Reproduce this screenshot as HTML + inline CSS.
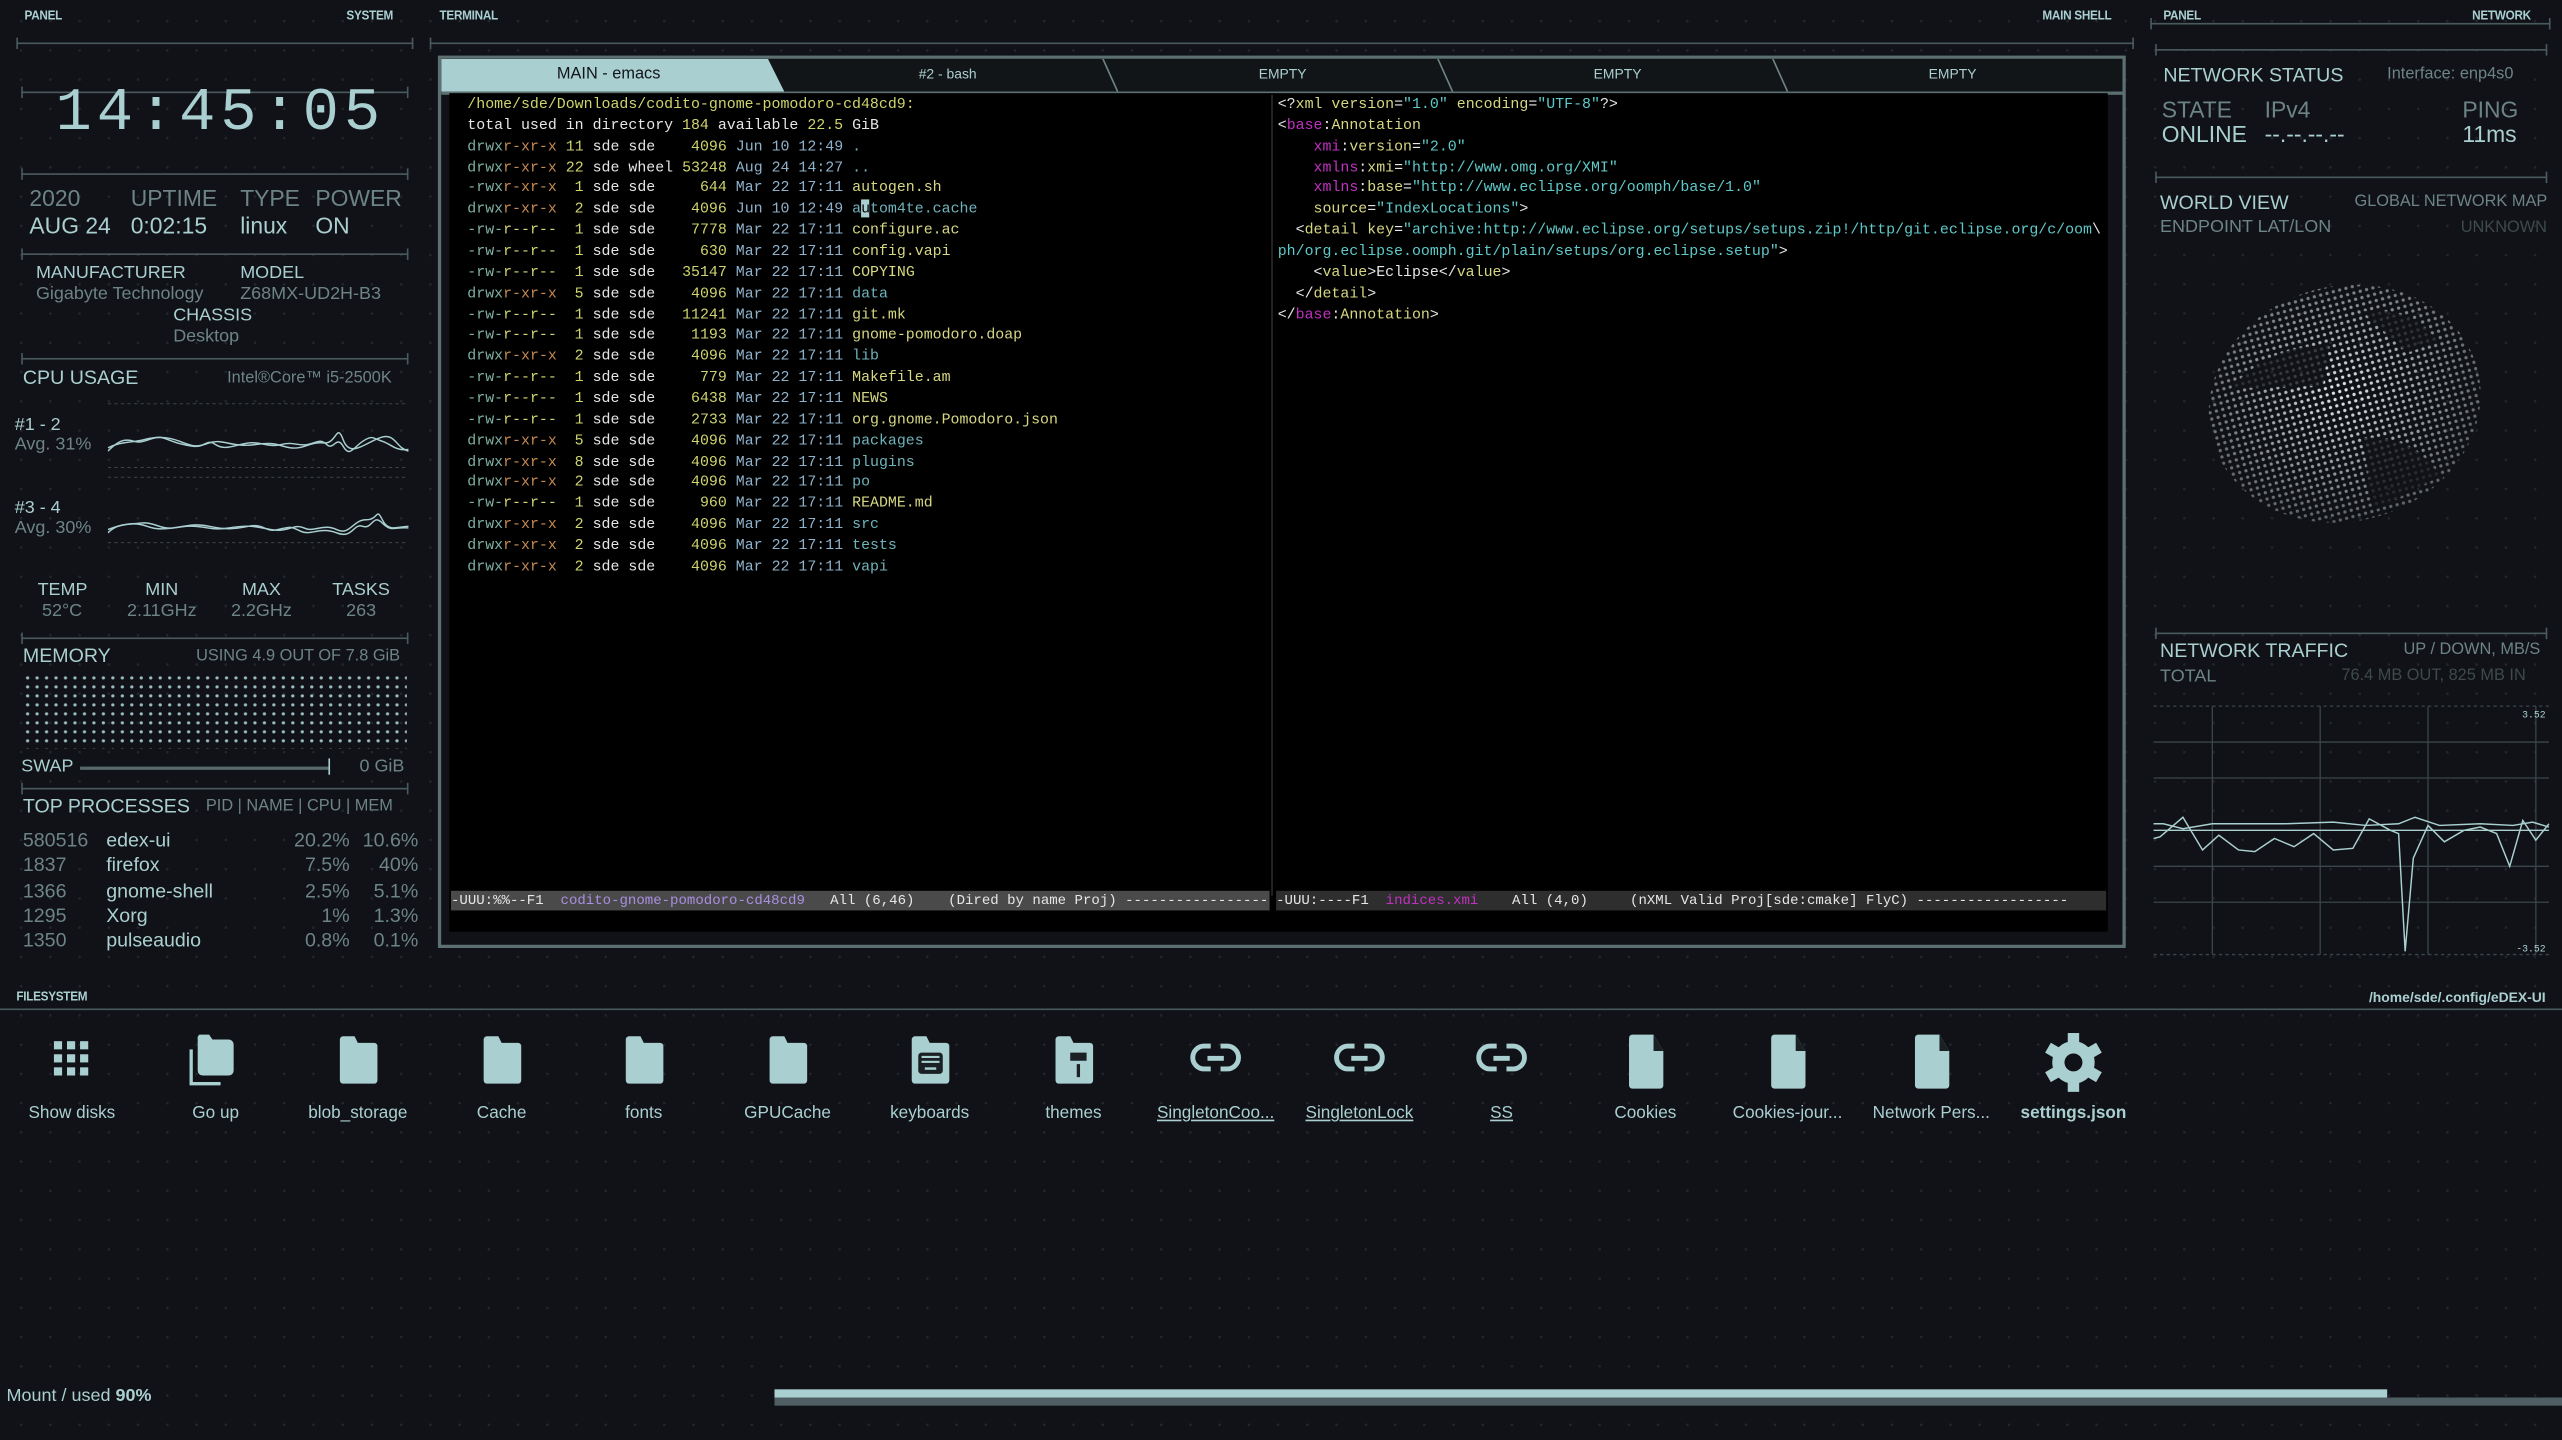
<!DOCTYPE html>
<html><head><meta charset="utf-8">
<style>
html,body{margin:0;padding:0;background:#101217;overflow:hidden}
#root{position:absolute;left:0;top:0;width:1568px;height:881px;transform:scale(1.63393,1.63451);transform-origin:0 0;
background-color:#101217;background-image:radial-gradient(circle,#23272c 0.7px,transparent 0.9px);background-size:17.9px 17.9px;background-position:4px 4px;
font-family:"Liberation Sans",sans-serif;color:#aacfd1;overflow:hidden}
.a{position:absolute;white-space:nowrap}
.hd{font-size:8px;font-weight:bold;letter-spacing:-0.2px;transform:scaleX(0.9);transform-origin:0 0}
.ln{position:absolute;height:1px;background:#4a5a5c}
.ln:before,.ln:after{content:"";position:absolute;top:-3px;width:1px;height:7px;background:#4a5a5c}
.ln:before{left:0}.ln:after{right:0}
.dim{color:#6d8486}
.mono{font-family:"Liberation Mono",monospace}
#term{position:absolute;left:268px;top:34px;width:1033px;height:546px;border:2px solid #5d7071;box-sizing:border-box;background:#101217}
.tab{position:absolute;top:0;height:19px;font-size:8.5px;line-height:19px;text-align:center;color:#aacfd1}
pre{margin:0;font-family:"Liberation Mono",monospace;font-size:9.15px;line-height:12.86px;color:#e6e6e6;white-space:pre !important}
.p{color:#7fb0a4}.o{color:#c58a52}.y{color:#cfd46e}.w{color:#e6e6e6}.b{color:#8fb2cc}.d{color:#6fb3bb}.f{color:#d6d782}.m{color:#c031c0}.c{color:#5fc8c8}
.fi{position:absolute;top:632px;width:88px;text-align:center}
.fi .lb{position:absolute;top:43px;left:0;width:88px;font-size:10.5px;color:#aacfd1;text-align:center}
.fi svg{display:block;margin:0 auto}
</style></head><body><div id="root">

<!-- LEFT PANEL -->
<div class="a hd" style="left:15px;top:5px">PANEL</div>
<div class="a hd" style="left:212px;top:5px">SYSTEM</div>
<div class="ln" style="left:10px;top:26px;width:243px"></div>
<div class="ln" style="left:13px;top:56px;width:237px"></div>
<div class="a" style="left:34px;top:49px;font-size:37px;letter-spacing:3px;font-family:'Liberation Mono',monospace;color:#aacfd1">14:45:05</div>
<div class="ln" style="left:13px;top:106px;width:237px"></div>
<div class="a" style="left:18px;top:113px;font-size:14px;line-height:17px"><span class="dim">2020</span><br>AUG 24</div>
<div class="a" style="left:80px;top:113px;font-size:14px;line-height:17px"><span class="dim">UPTIME</span><br>0:02:15</div>
<div class="a" style="left:147px;top:113px;font-size:14px;line-height:17px"><span class="dim">TYPE</span><br>linux</div>
<div class="a" style="left:193px;top:113px;font-size:14px;line-height:17px"><span class="dim">POWER</span><br>ON</div>
<div class="ln" style="left:13px;top:155px;width:237px"></div>
<div class="a" style="left:22px;top:161px;font-size:11px;line-height:13px">MANUFACTURER<br><span class="dim">Gigabyte Technology</span></div>
<div class="a" style="left:147px;top:161px;font-size:11px;line-height:13px">MODEL<br><span class="dim">Z68MX-UD2H-B3</span></div>
<div class="a" style="left:106px;top:187px;font-size:11px;line-height:13px">CHASSIS<br><span class="dim">Desktop</span></div>
<div class="ln" style="left:13px;top:219px;width:237px"></div>
<div class="a" style="left:14px;top:224px;font-size:12px">CPU USAGE</div>
<div class="a dim" style="left:139px;top:226px;font-size:10px">Intel®Core™ i5-2500K</div>
<div class="a" style="left:9px;top:254px;font-size:11px;line-height:12px">#1 - 2<br><span class="dim">Avg. 31%</span></div>
<div class="a" style="left:9px;top:305px;font-size:11px;line-height:12px">#3 - 4<br><span class="dim">Avg. 30%</span></div>
<svg class="a" style="left:66px;top:246px" width="184" height="100" viewBox="0 0 184 100">
<g stroke="#3b4548" stroke-dasharray="2 2" stroke-width="0.6"><line x1="0" y1="1" x2="184" y2="1"/><line x1="0" y1="40" x2="184" y2="40"/><line x1="0" y1="46" x2="184" y2="46"/><line x1="0" y1="86" x2="184" y2="86"/></g>
<g fill="none" stroke="#aacfd1" stroke-width="0.9">
<path d="M0 30 C6 24 10 22 16 24 S28 20 34 22 S44 26 52 27 S60 22 66 26 S78 26 86 25 S98 28 106 26 S116 27 122 26 S130 22 134 26 S140 20 144 27 S150 28 156 24 S162 22 168 24 S176 30 184 29"/>
<path d="M0 28 C8 24 14 25 22 23 S36 21 44 24 S54 28 62 25 S76 28 90 26 S104 27 112 28 S124 24 132 25 S140 12 144 23 S156 26 166 22 S176 28 184 30"/>
<path d="M0 80 C6 74 12 75 20 74 S32 78 40 77 S52 74 62 76 S76 78 86 76 S96 80 104 78 S112 76 118 79 S130 76 140 80 S150 74 156 76 S162 68 168 74 S176 76 184 77"/>
<path d="M0 78 C8 75 16 73 24 76 S38 77 48 76 S62 79 74 77 S90 76 100 78 S114 74 120 77 S132 74 140 78 S150 72 158 72 S164 64 168 72 S178 76 184 76"/>
</g></svg>
<div class="a" style="left:23px;top:355px;font-size:11px;line-height:13px;text-align:center;width:30px">TEMP<br><span class="dim">52°C</span></div>
<div class="a" style="left:76px;top:355px;font-size:11px;line-height:13px;text-align:center;width:46px">MIN<br><span class="dim">2.11GHz</span></div>
<div class="a" style="left:137px;top:355px;font-size:11px;line-height:13px;text-align:center;width:46px">MAX<br><span class="dim">2.2GHz</span></div>
<div class="a" style="left:198px;top:355px;font-size:11px;line-height:13px;text-align:center;width:46px">TASKS<br><span class="dim">263</span></div>
<div class="ln" style="left:13px;top:390px;width:237px"></div>
<div class="a" style="left:14px;top:394px;font-size:12px">MEMORY</div>
<div class="a dim" style="left:120px;top:396px;font-size:10px">USING 4.9 OUT OF 7.8 GiB</div>
<div class="a" style="left:14px;top:412px;width:235px;height:46px;background-image:radial-gradient(circle,#aacfd1 0.9px,transparent 1.1px);background-size:5.8px 5.5px;opacity:0.9"></div>
<div class="a" style="left:13px;top:463px;font-size:11px">SWAP</div>
<div class="a" style="left:49px;top:469px;width:152px;height:2px;background:#56686a"></div>
<div class="a" style="left:201px;top:464px;width:1px;height:10px;background:#aacfd1"></div>
<div class="a dim" style="left:220px;top:463px;font-size:11px">0 GiB</div>
<div class="ln" style="left:13px;top:482px;width:237px"></div>
<div class="a" style="left:14px;top:486px;font-size:12px">TOP PROCESSES</div>
<div class="a dim" style="left:126px;top:488px;font-size:10px">PID | NAME | CPU | MEM</div>
<div class="a" style="left:14px;top:507px;font-size:12px;line-height:15.3px"><span class="dim">580516<br>1837<br>1366<br>1295<br>1350</span></div>
<div class="a" style="left:65px;top:507px;font-size:12px;line-height:15.3px">edex-ui<br>firefox<br>gnome-shell<br>Xorg<br>pulseaudio</div>
<div class="a dim" style="left:160px;top:507px;width:54px;text-align:right;font-size:12px;line-height:15.3px">20.2%<br>7.5%<br>2.5%<br>1%<br>0.8%</div>
<div class="a dim" style="left:214px;top:507px;width:42px;text-align:right;font-size:12px;line-height:15.3px">10.6%<br>40%<br>5.1%<br>1.3%<br>0.1%</div>

<!-- TERMINAL HEADER -->
<div class="a hd" style="left:269px;top:5px">TERMINAL</div>
<div class="a hd" style="left:1250px;top:5px">MAIN SHELL</div>
<div class="ln" style="left:263px;top:26px;width:1043px"></div>

<div id="term">
<div class="a" style="left:0;top:0;width:1029px;height:20px;background:#121518;border-bottom:2px solid #5d7071"></div>
<svg class="a" style="left:0;top:0" width="1029" height="20"><polygon points="0,0 200,0 210,20 0,20" fill="#aacfd1"/>
<g stroke="#6d8486" stroke-width="1"><line x1="405" y1="0" x2="414" y2="20"/><line x1="610" y1="0" x2="619" y2="20"/><line x1="815" y1="0" x2="824" y2="20"/></g></svg>
<div class="tab" style="left:0;width:205px;color:#10161a;font-size:10px">MAIN - emacs</div>
<div class="tab" style="left:210px;width:200px">#2 - bash</div>
<div class="tab" style="left:415px;width:200px">EMPTY</div>
<div class="tab" style="left:620px;width:200px">EMPTY</div>
<div class="tab" style="left:825px;width:200px">EMPTY</div>
<div class="a" style="left:5px;top:21px;width:1015px;height:513px;background:#000"></div>
<div class="a" style="left:508px;top:22px;width:1px;height:490px;background:#2a2a2a"></div>
<pre class="a" style="left:16px;top:22px"><span class="y">/home/sde/Downloads/codito-gnome-pomodoro-cd48cd9:</span>
<span class="w">total used in directory </span><span class="y">184</span> available <span class="y">22.5</span> GiB
<span class="p">drwx</span><span class="o">r-xr-x</span> <span class="y">11</span> sde sde    <span class="y">4096</span> <span class="b">Jun 10 12:49</span> <span class="d">.</span>
<span class="p">drwx</span><span class="o">r-xr-x</span> <span class="y">22</span> sde wheel <span class="y">53248</span> <span class="b">Aug 24 14:27</span> <span class="d">..</span>
<span class="p">-rwx</span><span class="o">r-xr-x</span>  <span class="y">1</span> sde sde     <span class="y">644</span> <span class="b">Mar 22 17:11</span> <span class="f">autogen.sh</span>
<span class="p">drwx</span><span class="o">r-xr-x</span>  <span class="y">2</span> sde sde    <span class="y">4096</span> <span class="b">Jun 10 12:49</span> <span class="d">a<span style="background:#aacfd1;color:#000">u</span>tom4te.cache</span>
<span class="p">-rw-</span><span class="y">r--r--</span>  <span class="y">1</span> sde sde    <span class="y">7778</span> <span class="b">Mar 22 17:11</span> <span class="f">configure.ac</span>
<span class="p">-rw-</span><span class="y">r--r--</span>  <span class="y">1</span> sde sde     <span class="y">630</span> <span class="b">Mar 22 17:11</span> <span class="f">config.vapi</span>
<span class="p">-rw-</span><span class="y">r--r--</span>  <span class="y">1</span> sde sde   <span class="y">35147</span> <span class="b">Mar 22 17:11</span> <span class="f">COPYING</span>
<span class="p">drwx</span><span class="o">r-xr-x</span>  <span class="y">5</span> sde sde    <span class="y">4096</span> <span class="b">Mar 22 17:11</span> <span class="d">data</span>
<span class="p">-rw-</span><span class="y">r--r--</span>  <span class="y">1</span> sde sde   <span class="y">11241</span> <span class="b">Mar 22 17:11</span> <span class="f">git.mk</span>
<span class="p">-rw-</span><span class="y">r--r--</span>  <span class="y">1</span> sde sde    <span class="y">1193</span> <span class="b">Mar 22 17:11</span> <span class="f">gnome-pomodoro.doap</span>
<span class="p">drwx</span><span class="o">r-xr-x</span>  <span class="y">2</span> sde sde    <span class="y">4096</span> <span class="b">Mar 22 17:11</span> <span class="d">lib</span>
<span class="p">-rw-</span><span class="y">r--r--</span>  <span class="y">1</span> sde sde     <span class="y">779</span> <span class="b">Mar 22 17:11</span> <span class="f">Makefile.am</span>
<span class="p">-rw-</span><span class="y">r--r--</span>  <span class="y">1</span> sde sde    <span class="y">6438</span> <span class="b">Mar 22 17:11</span> <span class="f">NEWS</span>
<span class="p">-rw-</span><span class="y">r--r--</span>  <span class="y">1</span> sde sde    <span class="y">2733</span> <span class="b">Mar 22 17:11</span> <span class="f">org.gnome.Pomodoro.json</span>
<span class="p">drwx</span><span class="o">r-xr-x</span>  <span class="y">5</span> sde sde    <span class="y">4096</span> <span class="b">Mar 22 17:11</span> <span class="d">packages</span>
<span class="p">drwx</span><span class="o">r-xr-x</span>  <span class="y">8</span> sde sde    <span class="y">4096</span> <span class="b">Mar 22 17:11</span> <span class="d">plugins</span>
<span class="p">drwx</span><span class="o">r-xr-x</span>  <span class="y">2</span> sde sde    <span class="y">4096</span> <span class="b">Mar 22 17:11</span> <span class="d">po</span>
<span class="p">-rw-</span><span class="y">r--r--</span>  <span class="y">1</span> sde sde     <span class="y">960</span> <span class="b">Mar 22 17:11</span> <span class="f">README.md</span>
<span class="p">drwx</span><span class="o">r-xr-x</span>  <span class="y">2</span> sde sde    <span class="y">4096</span> <span class="b">Mar 22 17:11</span> <span class="d">src</span>
<span class="p">drwx</span><span class="o">r-xr-x</span>  <span class="y">2</span> sde sde    <span class="y">4096</span> <span class="b">Mar 22 17:11</span> <span class="d">tests</span>
<span class="p">drwx</span><span class="o">r-xr-x</span>  <span class="y">2</span> sde sde    <span class="y">4096</span> <span class="b">Mar 22 17:11</span> <span class="d">vapi</span></pre>
<pre class="a" style="left:512px;top:22px"><span class="w">&lt;?</span><span class="f">xml version</span>=<span class="c">"1.0"</span> <span class="f">encoding</span>=<span class="c">"UTF-8"</span>?&gt;
&lt;<span class="m">base</span>:<span class="f">Annotation</span>
    <span class="m">xmi</span>:<span class="f">version</span>=<span class="c">"2.0"</span>
    <span class="m">xmlns</span>:<span class="f">xmi</span>=<span class="c">"http://www.omg.org/XMI"</span>
    <span class="m">xmlns</span>:<span class="f">base</span>=<span class="c">"http://www.eclipse.org/oomph/base/1.0"</span>
    <span class="f">source</span>=<span class="c">"IndexLocations"</span>&gt;
  &lt;<span class="f">detail key</span>=<span class="c">"archive:http://www.eclipse.org/setups/setups.zip!/http/git.eclipse.org/c/oom</span>\
<span class="c">ph/org.eclipse.oomph.git/plain/setups/org.eclipse.setup"</span>&gt;
    &lt;<span class="f">value</span>&gt;Eclipse&lt;/<span class="f">value</span>&gt;
  &lt;/<span class="f">detail</span>&gt;
&lt;/<span class="m">base</span>:<span class="f">Annotation</span>&gt;</pre>
<div class="a mono" style="left:6px;top:509px;width:501px;height:12px;background:#4a4a4a;font-size:8.6px;line-height:12px;color:#e6e6e6;overflow:hidden;white-space:pre">-UUU:%%--F1  <span style="color:#a98fe0">codito-gnome-pomodoro-cd48cd9</span>   All (6,46)    (Dired by name Proj) -----------------</div>
<div class="a mono" style="left:511px;top:509px;width:508px;height:12px;background:#2e2e2e;font-size:8.6px;line-height:12px;color:#e6e6e6;overflow:hidden;white-space:pre">-UUU:----F1  <span class="m">indices.xmi</span>    All (4,0)     (nXML Valid Proj[sde:cmake] FlyC) ------------------</div>
</div>

<!-- RIGHT PANEL -->
<div class="a hd" style="left:1324px;top:5px">PANEL</div>
<div class="a hd" style="left:1513px;top:5px">NETWORK</div>
<div class="ln" style="left:1316px;top:14px;width:245px"></div>
<div class="ln" style="left:1319px;top:30px;width:240px"></div>
<div class="a" style="left:1324px;top:39px;font-size:12px">NETWORK STATUS</div>
<div class="a dim" style="left:1461px;top:40px;font-size:10px">Interface: enp4s0</div>
<div class="a" style="left:1323px;top:60px;font-size:14px;line-height:15px"><span class="dim">STATE</span><br>ONLINE</div>
<div class="a" style="left:1386px;top:60px;font-size:14px;line-height:15px"><span class="dim">IPv4</span><br>--.--.--.--</div>
<div class="a" style="left:1507px;top:60px;font-size:14px;line-height:15px"><span class="dim">PING</span><br>11ms</div>
<div class="ln" style="left:1319px;top:108px;width:240px"></div>
<div class="a" style="left:1322px;top:117px;font-size:12px">WORLD VIEW</div>
<div class="a dim" style="left:1441px;top:118px;font-size:10px">GLOBAL NETWORK MAP</div>
<div class="a dim" style="left:1322px;top:133px;font-size:11px">ENDPOINT LAT/LON</div>
<div class="a" style="left:1506px;top:134px;font-size:10px;color:#3e4a4c">UNKNOWN</div>
<svg class="a" style="left:1340px;top:165px" width="200" height="160" viewBox="0 0 200 160">
<defs><pattern id="dp" width="4" height="4" patternUnits="userSpaceOnUse"><circle cx="2" cy="2" r="1" fill="#e4ecee"/></pattern>
<radialGradient id="sh" cx="50%" cy="45%" r="60%"><stop offset="0" stop-color="#fff" stop-opacity="1"/><stop offset="1" stop-color="#fff" stop-opacity="0.3"/></radialGradient>
<mask id="mk"><ellipse cx="95" cy="82" rx="84" ry="72" fill="url(#sh)"/><path d="M30 55 Q60 35 95 45 L85 68 Z M100 105 Q130 110 140 140 L95 150 Z M120 30 Q150 35 160 60 L140 62 Z" fill="#000" opacity="0.75"/></mask></defs>
<ellipse cx="95" cy="82" rx="84" ry="72" fill="url(#dp)" mask="url(#mk)" transform="rotate(-15 95 82)"/>
</svg>
<div class="ln" style="left:1319px;top:387px;width:240px"></div>
<div class="a" style="left:1322px;top:391px;font-size:12px">NETWORK TRAFFIC</div>
<div class="a dim" style="left:1471px;top:392px;font-size:10px">UP / DOWN, MB/S</div>
<div class="a dim" style="left:1322px;top:408px;font-size:11px">TOTAL</div>
<div class="a" style="left:1433px;top:408px;font-size:10px;color:#3e4a4c">76.4 MB OUT, 825 MB IN</div>
<svg class="a" style="left:1318px;top:430px" width="244" height="156" viewBox="0 0 244 156">
<g stroke="#3a4649" stroke-width="0.8"><line x1="0" y1="2" x2="244" y2="2" stroke-dasharray="2 2"/><line x1="0" y1="24" x2="242" y2="24"/><line x1="0" y1="46" x2="242" y2="46"/><line x1="0" y1="100" x2="242" y2="100"/><line x1="0" y1="122" x2="242" y2="122"/><line x1="0" y1="154" x2="244" y2="154" stroke-dasharray="2 2"/>
<line x1="36" y1="2" x2="36" y2="154"/><line x1="102" y1="2" x2="102" y2="154"/><line x1="168" y1="2" x2="168" y2="154"/><line x1="234" y1="2" x2="234" y2="154"/></g>
<line x1="0" y1="78" x2="242" y2="78" stroke="#aacfd1" stroke-width="0.8"/>
<g fill="none" stroke="#aacfd1" stroke-width="0.9">
<path d="M0 74 L6 74 L18 77 L36 74 L80 74 L110 73 L130 75 L150 74 L160 70 L175 75 L200 74 L220 75 L232 73 L242 76"/>
<path d="M0 83 L4 82 L18 70 L30 90 L40 81 L52 90 L62 91 L74 83 L86 88 L98 80 L110 90 L122 89 L132 71 L145 78 L150 80 L154 152 L159 95 L168 75 L178 85 L190 78 L200 76 L210 80 L218 100 L226 72 L234 84 L242 74"/>
</g>
<text x="240" y="9" font-size="6" fill="#aacfd1" font-family="Liberation Mono" text-anchor="end">3.52</text>
<text x="240" y="152" font-size="6" fill="#aacfd1" font-family="Liberation Mono" text-anchor="end">-3.52</text>
</svg>

<!-- FILESYSTEM -->
<div class="a hd" style="left:10px;top:605px">FILESYSTEM</div>
<div class="a" style="right:10px;top:605px;font-size:8.5px;font-weight:bold">/home/sde/.config/eDEX-UI</div>
<div class="a" style="left:0;top:617px;width:1568px;height:1px;background:#4a5a5c"></div>

<div class="fi" style="left:0"><svg width="30" height="40" viewBox="0 0 30 40"><g fill="#aacfd1"><rect x="4" y="5" width="5" height="5"/><rect x="12" y="5" width="5" height="5"/><rect x="20" y="5" width="5" height="5"/><rect x="4" y="13" width="5" height="5"/><rect x="12" y="13" width="5" height="5"/><rect x="20" y="13" width="5" height="5"/><rect x="4" y="21" width="5" height="5"/><rect x="12" y="21" width="5" height="5"/><rect x="20" y="21" width="5" height="5"/></g></svg><div class="lb">Show disks</div></div>
<div class="fi" style="left:88px"><svg width="40" height="40" viewBox="0 0 40 40"><path d="M10 1 h6 l2 3 h10 a3 3 0 0 1 3 3 v16 a3 3 0 0 1 -3 3 h-16 a3 3 0 0 1 -3 -3 v-19 a3 3 0 0 1 1 -3z" fill="#aacfd1"/><path d="M5 10 v21 h18" stroke="#aacfd1" stroke-width="2" fill="none"/></svg><div class="lb">Go up</div></div>
<div class="fi" style="left:175px"><svg width="40" height="40" viewBox="0 0 40 40"><path d="M11 2 h7 l2 4 h10 a2 2 0 0 1 2 2 v21 a2 2 0 0 1 -2 2 h-19 a2 2 0 0 1 -2 -2 v-25 a2 2 0 0 1 2 -2z" fill="#aacfd1"/></svg><div class="lb">blob_storage</div></div>
<div class="fi" style="left:263px"><svg width="40" height="40" viewBox="0 0 40 40"><path d="M11 2 h7 l2 4 h10 a2 2 0 0 1 2 2 v21 a2 2 0 0 1 -2 2 h-19 a2 2 0 0 1 -2 -2 v-25 a2 2 0 0 1 2 -2z" fill="#aacfd1"/></svg><div class="lb">Cache</div></div>
<div class="fi" style="left:350px"><svg width="40" height="40" viewBox="0 0 40 40"><path d="M11 2 h7 l2 4 h10 a2 2 0 0 1 2 2 v21 a2 2 0 0 1 -2 2 h-19 a2 2 0 0 1 -2 -2 v-25 a2 2 0 0 1 2 -2z" fill="#aacfd1"/></svg><div class="lb">fonts</div></div>
<div class="fi" style="left:438px"><svg width="40" height="40" viewBox="0 0 40 40"><path d="M11 2 h7 l2 4 h10 a2 2 0 0 1 2 2 v21 a2 2 0 0 1 -2 2 h-19 a2 2 0 0 1 -2 -2 v-25 a2 2 0 0 1 2 -2z" fill="#aacfd1"/></svg><div class="lb">GPUCache</div></div>
<div class="fi" style="left:525px"><svg width="40" height="40" viewBox="0 0 40 40"><path d="M11 2 h7 l2 4 h10 a2 2 0 0 1 2 2 v21 a2 2 0 0 1 -2 2 h-19 a2 2 0 0 1 -2 -2 v-25 a2 2 0 0 1 2 -2z" fill="#aacfd1"/><rect x="13" y="12" width="15" height="13" rx="2" fill="#1a2024"/><g fill="#aacfd1"><rect x="15" y="14" width="11" height="1.3"/><rect x="15" y="17" width="11" height="1.3"/><rect x="17" y="21" width="7" height="1.5"/></g></svg><div class="lb">keyboards</div></div>
<div class="fi" style="left:613px"><svg width="40" height="40" viewBox="0 0 40 40"><path d="M11 2 h7 l2 4 h10 a2 2 0 0 1 2 2 v21 a2 2 0 0 1 -2 2 h-19 a2 2 0 0 1 -2 -2 v-25 a2 2 0 0 1 2 -2z" fill="#aacfd1"/><path d="M18 12 h10 v5 h-4 v10 h-2 v-8 h2 v-2 h-6z" fill="#1a2024"/></svg><div class="lb">themes</div></div>
<div class="fi" style="left:700px"><svg width="40" height="40" viewBox="0 0 40 40"><path d="M17 8 h-4 a7 7 0 0 0 0 14 h4 M23 8 h4 a7 7 0 0 1 0 14 h-4" stroke="#aacfd1" stroke-width="3" fill="none"/><rect x="15" y="14" width="10" height="3" fill="#aacfd1"/></svg><div class="lb" style="text-decoration:underline">SingletonCoo...</div></div>
<div class="fi" style="left:788px"><svg width="40" height="40" viewBox="0 0 40 40"><path d="M17 8 h-4 a7 7 0 0 0 0 14 h4 M23 8 h4 a7 7 0 0 1 0 14 h-4" stroke="#aacfd1" stroke-width="3" fill="none"/><rect x="15" y="14" width="10" height="3" fill="#aacfd1"/></svg><div class="lb" style="text-decoration:underline">SingletonLock</div></div>
<div class="fi" style="left:875px"><svg width="40" height="40" viewBox="0 0 40 40"><path d="M17 8 h-4 a7 7 0 0 0 0 14 h4 M23 8 h4 a7 7 0 0 1 0 14 h-4" stroke="#aacfd1" stroke-width="3" fill="none"/><rect x="15" y="14" width="10" height="3" fill="#aacfd1"/></svg><div class="lb" style="text-decoration:underline">SS</div></div>
<div class="fi" style="left:963px"><svg width="40" height="40" viewBox="0 0 40 40"><path d="M12 1 h13 l6 10 v21 a2 2 0 0 1 -2 2 h-17 a2 2 0 0 1 -2 -2 v-29 a2 2 0 0 1 2 -2z" fill="#aacfd1"/><path d="M25 1 v10 h6" fill="#1a2024"/></svg><div class="lb">Cookies</div></div>
<div class="fi" style="left:1050px"><svg width="40" height="40" viewBox="0 0 40 40"><path d="M12 1 h13 l6 10 v21 a2 2 0 0 1 -2 2 h-17 a2 2 0 0 1 -2 -2 v-29 a2 2 0 0 1 2 -2z" fill="#aacfd1"/><path d="M25 1 v10 h6" fill="#1a2024"/></svg><div class="lb">Cookies-jour...</div></div>
<div class="fi" style="left:1138px"><svg width="40" height="40" viewBox="0 0 40 40"><path d="M12 1 h13 l6 10 v21 a2 2 0 0 1 -2 2 h-17 a2 2 0 0 1 -2 -2 v-29 a2 2 0 0 1 2 -2z" fill="#aacfd1"/><path d="M25 1 v10 h6" fill="#1a2024"/></svg><div class="lb">Network Pers...</div></div>
<div class="fi" style="left:1225px"><svg width="40" height="40" viewBox="0 0 40 40"><g fill="#aacfd1" transform="translate(20 18)"><circle r="13"/><g><rect x="-3.5" y="-18" width="7" height="36"/><rect x="-3.5" y="-18" width="7" height="36" transform="rotate(60)"/><rect x="-3.5" y="-18" width="7" height="36" transform="rotate(120)"/></g></g><circle cx="20" cy="18" r="5.5" fill="#101217"/></svg><div class="lb" style="font-weight:bold">settings.json</div></div>

<!-- BOTTOM -->
<div class="a" style="left:4px;top:848px;font-size:11px">Mount / used <b>90%</b></div>
<div class="a" style="left:474px;top:850px;width:987px;height:5px;background:#aacfd1"></div>
<div class="a" style="left:474px;top:855px;width:1094px;height:5px;background:#4f5e62"></div>
</div></body></html>
